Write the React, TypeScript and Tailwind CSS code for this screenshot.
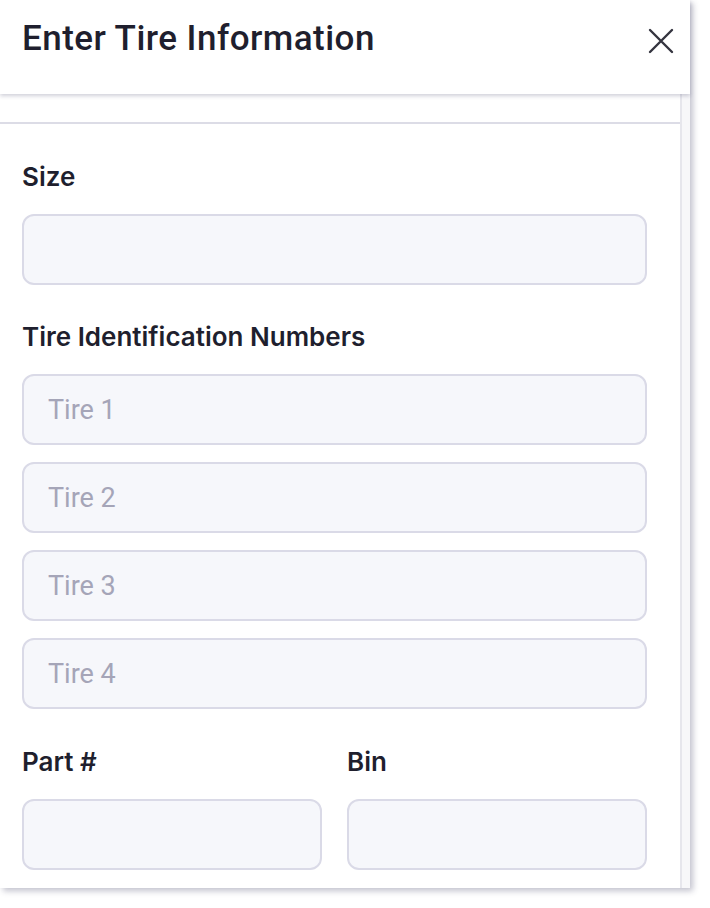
import React from "react";

const labelCls =
  "block text-[26px] leading-[32px] font-semibold text-[#1f1f2e] mb-[21px] [font-family:Inter,'Noto_Sans',sans-serif]";
const inputCls =
  "block w-full h-[71px] rounded-[12px] border-2 border-[#dadae7] bg-[#f6f7fb] pl-[24px] text-[27px] text-[#1f1f2e] placeholder:text-[#a5a5b8] outline-none [font-family:Roboto,'Liberation_Sans',sans-serif]";

function Field({ placeholder }: { placeholder?: string }) {
  return <input className={inputCls} placeholder={placeholder} />;
}

export default function App() {
  return (
    <div className="w-[710px] h-[908px] bg-white">
      <div className="w-[690px] h-[888px] bg-white flex flex-col shadow-[3px_3px_6px_rgba(40,40,80,0.28)]">
        <div className="h-[94px] shrink-0 flex items-start justify-between pl-[22px] pr-[14px] pt-[19px] shadow-[0_2px_4px_rgba(40,40,80,0.22)] relative z-10 bg-white">
          <h1 className="text-[35px] leading-[40px] font-medium tracking-[0.45px] text-[#1f1f2e] [font-family:Roboto,'Liberation_Sans',sans-serif]">
            Enter Tire Information
          </h1>
          <svg
            width="30"
            height="30"
            viewBox="0 0 30 30"
            className="mt-[7px]"
            fill="none"
            stroke="#34343f"
            strokeWidth="2.4"
            strokeLinecap="round"
          >
            <path d="M4 4 L26 26 M26 4 L4 26" />
          </svg>
        </div>
        <div className="flex flex-1 min-h-0">
          <div className="flex-1 flex flex-col">
            <div className="h-[30px] border-b-2 border-[#dcdce6]" />
            <div className="px-[22px] pt-[37px] pr-[33px]">
              <label className={labelCls}>Size</label>
              <Field />
              <label className={labelCls + " mt-[36px]"}>Tire Identification Numbers</label>
              <div className="flex flex-col gap-[17px]">
                <Field placeholder="Tire 1" />
                <Field placeholder="Tire 2" />
                <Field placeholder="Tire 3" />
                <Field placeholder="Tire 4" />
              </div>
              <div className="grid grid-cols-2 gap-[25px] mt-[37px]">
                <div>
                  <label className={labelCls}>Part #</label>
                  <Field />
                </div>
                <div>
                  <label className={labelCls}>Bin</label>
                  <Field />
                </div>
              </div>
            </div>
          </div>
          <div className="w-[10px] shrink-0 bg-[#f7f7f9] border-l-2 border-[#e6e6ec]" />
        </div>
      </div>
    </div>
  );
}
